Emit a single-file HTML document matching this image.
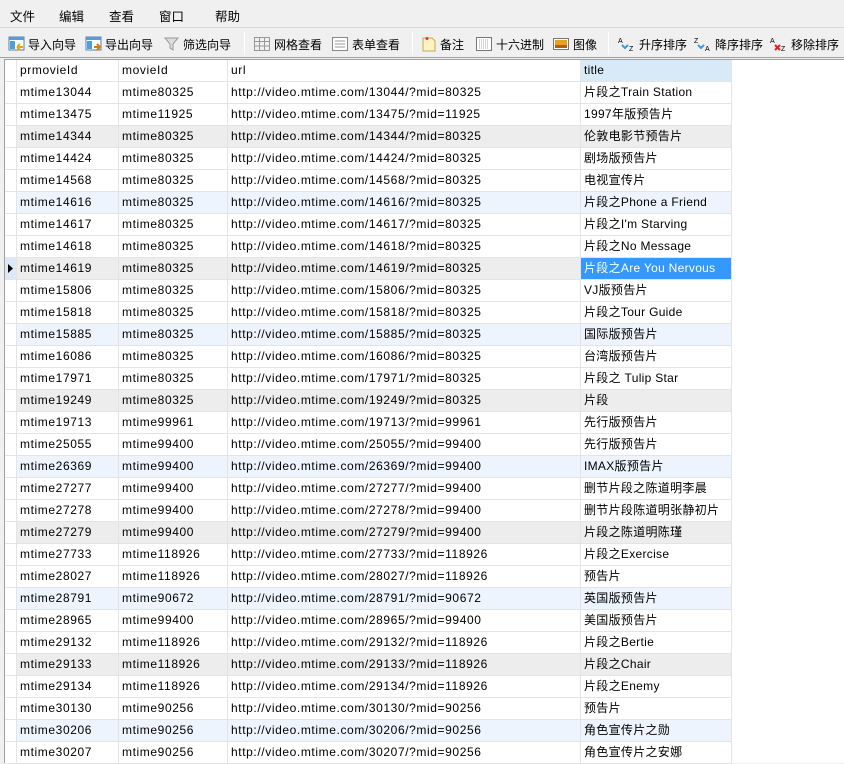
<!DOCTYPE html>
<html><head><meta charset="utf-8">
<style>
*{margin:0;padding:0;box-sizing:border-box}
body{width:844px;height:763px;overflow:hidden;background:#f0f0f0;font-family:"Liberation Sans","Noto Sans CJK SC",sans-serif;font-size:12px;color:#000;position:relative}
.menu{position:absolute;top:0;left:0;width:844px;height:28px;background:#f0f0f0;border-bottom:1px solid #d9d9d9}
.menu span{position:absolute;top:6px;font-size:12.5px}
.tb{position:absolute;top:29px;left:0;width:844px;height:29px;background:#f0f0f0;border-bottom:1px solid #a0a0a0}
.tb .it{position:absolute;top:6px;height:18px;display:flex;align-items:center;font-size:12px;white-space:nowrap}
.tb .it svg{margin-right:3px}
.sep{position:absolute;top:3px;width:1px;height:23px;background:#c8c8c8;border-right:1px solid #fff}
.grid{position:absolute;top:59px;left:4px;width:840px;height:704px;background:#fff;border-left:1px solid #a0a0a0;border-top:1px solid #a0a0a0}
.row{position:absolute;left:0;width:840px;height:22px}
.c{position:absolute;top:0;height:22px;line-height:21px;padding-left:3px;border-right:1px solid #e4e4e4;border-bottom:1px solid #e4e4e4;white-space:nowrap;overflow:hidden;letter-spacing:0.6px}
.c0{left:0;width:12px;padding:0}
.c1{left:12px;width:102px}
.c2{left:114px;width:109px}
.c3{left:223px;width:353px}
.c4{left:576px;width:151px;letter-spacing:0.3px}
.g .c1,.g .c2,.g .c3,.g .c4{background:#ededed}
.b .c1,.b .c2,.b .c3,.b .c4{background:#edf4fd}
.hdr .c4{background:#d8e9f8}
.sel .c4{background:#3399ff;color:#fff}
.sel .c0{background:#dce9f6}
</style></head><body>
<div class="menu">
<span style="left:10px">文件</span><span style="left:59px">编辑</span><span style="left:109px">查看</span><span style="left:159px">窗口</span><span style="left:215px">帮助</span>
</div>
<div class="tb">
<div class="it" style="left:8px"><svg width="17" height="16"><rect x="1" y="1" width="15" height="13" fill="#fff" stroke="#5a7fa8"/><rect x="1" y="1" width="15" height="3" fill="#5b9bd5"/><rect x="2" y="5" width="5" height="8" fill="#4aa0d8"/><path d="M9 11h6M9 11l3-3M9 11l3 3" stroke="#e0b000" stroke-width="2" fill="none"/></svg>导入向导</div>
<div class="it" style="left:85px"><svg width="17" height="16"><rect x="1" y="1" width="15" height="13" fill="#fff" stroke="#5a7fa8"/><rect x="1" y="1" width="15" height="3" fill="#5b9bd5"/><rect x="2" y="5" width="5" height="8" fill="#4aa0d8"/><path d="M9 11h6M15 11l-3-3M15 11l-3 3" stroke="#e07b00" stroke-width="2" fill="none"/></svg>导出向导</div>
<div class="it" style="left:163px"><svg width="17" height="16"><path d="M2 2h13l-5 6v6l-3-2v-4z" fill="#ddd" stroke="#999"/></svg>筛选向导</div>
<div class="sep" style="left:244px"></div>
<div class="it" style="left:253px"><svg width="18" height="16"><path d="M1.5 1.5h15v13h-15zM1.5 5.5h15M1.5 10h15M6.5 1.5v13M11.5 1.5v13" fill="none" stroke="#999"/></svg>网格查看</div>
<div class="it" style="left:331px"><svg width="18" height="16"><rect x="1.5" y="1.5" width="15" height="13" fill="#fff" stroke="#888"/><path d="M4 5h10M4 8h10M4 11h10" stroke="#999"/></svg>表单查看</div>
<div class="sep" style="left:412px"></div>
<div class="it" style="left:421px"><svg width="16" height="16"><path d="M2 2h9l3 3v10h-12z" fill="#fdf3c0" stroke="#c9a94a"/><circle cx="6" cy="2.5" r="1.5" fill="#d33"/></svg>备注</div>
<div class="it" style="left:475px"><svg width="18" height="16"><rect x="1.5" y="1.5" width="15" height="13" fill="#fff" stroke="#777"/><path d="M4 4h10M4 6h10M4 8h10M4 10h10M4 12h10" stroke="#aaa" stroke-dasharray="1 1"/></svg>十六进制</div>
<div class="it" style="left:552px"><svg width="18" height="16"><rect x="1.5" y="2.5" width="15" height="11" fill="#fff" stroke="#777"/><rect x="3" y="4" width="12" height="8" fill="#e8a020"/><rect x="3" y="9" width="12" height="3" fill="#b06010"/></svg>图像</div>
<div class="sep" style="left:608px"></div>
<div class="it" style="left:618px"><svg width="18" height="16"><text x="0" y="7" font-size="7" font-family="Liberation Sans">A</text><text x="11" y="15" font-size="7" font-family="Liberation Sans">Z</text><path d="M4 9l3 3 3-3" stroke="#3a9ad9" stroke-width="2" fill="none"/></svg>升序排序</div>
<div class="it" style="left:694px"><svg width="18" height="16"><text x="0" y="7" font-size="7" font-family="Liberation Sans">Z</text><text x="11" y="15" font-size="7" font-family="Liberation Sans">A</text><path d="M4 9l3 3 3-3" stroke="#3a9ad9" stroke-width="2" fill="none"/></svg>降序排序</div>
<div class="it" style="left:770px"><svg width="18" height="16"><text x="0" y="7" font-size="7" font-family="Liberation Sans">A</text><text x="11" y="15" font-size="7" font-family="Liberation Sans">Z</text><path d="M5 9l5 5M10 9l-5 5" stroke="#d22" stroke-width="2"/></svg>移除排序</div>
</div>
<div class="grid">
<div class="row hdr" style="top:0"><div class="c c0"></div><div class="c c1">prmovieId</div><div class="c c2">movieId</div><div class="c c3">url</div><div class="c c4">title</div></div>
<div class="row" style="top:22px"><div class="c c0"></div><div class="c c1">mtime13044</div><div class="c c2">mtime80325</div><div class="c c3">http://video.mtime.com/13044/?mid=80325</div><div class="c c4">片段之Train Station</div></div>
<div class="row" style="top:44px"><div class="c c0"></div><div class="c c1">mtime13475</div><div class="c c2">mtime11925</div><div class="c c3">http://video.mtime.com/13475/?mid=11925</div><div class="c c4">1997年版预告片</div></div>
<div class="row g" style="top:66px"><div class="c c0"></div><div class="c c1">mtime14344</div><div class="c c2">mtime80325</div><div class="c c3">http://video.mtime.com/14344/?mid=80325</div><div class="c c4">伦敦电影节预告片</div></div>
<div class="row" style="top:88px"><div class="c c0"></div><div class="c c1">mtime14424</div><div class="c c2">mtime80325</div><div class="c c3">http://video.mtime.com/14424/?mid=80325</div><div class="c c4">剧场版预告片</div></div>
<div class="row" style="top:110px"><div class="c c0"></div><div class="c c1">mtime14568</div><div class="c c2">mtime80325</div><div class="c c3">http://video.mtime.com/14568/?mid=80325</div><div class="c c4">电视宣传片</div></div>
<div class="row b" style="top:132px"><div class="c c0"></div><div class="c c1">mtime14616</div><div class="c c2">mtime80325</div><div class="c c3">http://video.mtime.com/14616/?mid=80325</div><div class="c c4">片段之Phone a Friend</div></div>
<div class="row" style="top:154px"><div class="c c0"></div><div class="c c1">mtime14617</div><div class="c c2">mtime80325</div><div class="c c3">http://video.mtime.com/14617/?mid=80325</div><div class="c c4">片段之I'm Starving</div></div>
<div class="row" style="top:176px"><div class="c c0"></div><div class="c c1">mtime14618</div><div class="c c2">mtime80325</div><div class="c c3">http://video.mtime.com/14618/?mid=80325</div><div class="c c4">片段之No Message</div></div>
<div class="row g sel" style="top:198px"><div class="c c0"><svg width="11" height="21"><path d="M3 6l5 4.5-5 4.5z" fill="#000"/></svg></div><div class="c c1">mtime14619</div><div class="c c2">mtime80325</div><div class="c c3">http://video.mtime.com/14619/?mid=80325</div><div class="c c4">片段之Are You Nervous</div></div>
<div class="row" style="top:220px"><div class="c c0"></div><div class="c c1">mtime15806</div><div class="c c2">mtime80325</div><div class="c c3">http://video.mtime.com/15806/?mid=80325</div><div class="c c4">VJ版预告片</div></div>
<div class="row" style="top:242px"><div class="c c0"></div><div class="c c1">mtime15818</div><div class="c c2">mtime80325</div><div class="c c3">http://video.mtime.com/15818/?mid=80325</div><div class="c c4">片段之Tour Guide</div></div>
<div class="row b" style="top:264px"><div class="c c0"></div><div class="c c1">mtime15885</div><div class="c c2">mtime80325</div><div class="c c3">http://video.mtime.com/15885/?mid=80325</div><div class="c c4">国际版预告片</div></div>
<div class="row" style="top:286px"><div class="c c0"></div><div class="c c1">mtime16086</div><div class="c c2">mtime80325</div><div class="c c3">http://video.mtime.com/16086/?mid=80325</div><div class="c c4">台湾版预告片</div></div>
<div class="row" style="top:308px"><div class="c c0"></div><div class="c c1">mtime17971</div><div class="c c2">mtime80325</div><div class="c c3">http://video.mtime.com/17971/?mid=80325</div><div class="c c4">片段之 Tulip Star</div></div>
<div class="row g" style="top:330px"><div class="c c0"></div><div class="c c1">mtime19249</div><div class="c c2">mtime80325</div><div class="c c3">http://video.mtime.com/19249/?mid=80325</div><div class="c c4">片段</div></div>
<div class="row" style="top:352px"><div class="c c0"></div><div class="c c1">mtime19713</div><div class="c c2">mtime99961</div><div class="c c3">http://video.mtime.com/19713/?mid=99961</div><div class="c c4">先行版预告片</div></div>
<div class="row" style="top:374px"><div class="c c0"></div><div class="c c1">mtime25055</div><div class="c c2">mtime99400</div><div class="c c3">http://video.mtime.com/25055/?mid=99400</div><div class="c c4">先行版预告片</div></div>
<div class="row b" style="top:396px"><div class="c c0"></div><div class="c c1">mtime26369</div><div class="c c2">mtime99400</div><div class="c c3">http://video.mtime.com/26369/?mid=99400</div><div class="c c4">IMAX版预告片</div></div>
<div class="row" style="top:418px"><div class="c c0"></div><div class="c c1">mtime27277</div><div class="c c2">mtime99400</div><div class="c c3">http://video.mtime.com/27277/?mid=99400</div><div class="c c4">删节片段之陈道明李晨</div></div>
<div class="row" style="top:440px"><div class="c c0"></div><div class="c c1">mtime27278</div><div class="c c2">mtime99400</div><div class="c c3">http://video.mtime.com/27278/?mid=99400</div><div class="c c4">删节片段陈道明张静初片</div></div>
<div class="row g" style="top:462px"><div class="c c0"></div><div class="c c1">mtime27279</div><div class="c c2">mtime99400</div><div class="c c3">http://video.mtime.com/27279/?mid=99400</div><div class="c c4">片段之陈道明陈瑾</div></div>
<div class="row" style="top:484px"><div class="c c0"></div><div class="c c1">mtime27733</div><div class="c c2">mtime118926</div><div class="c c3">http://video.mtime.com/27733/?mid=118926</div><div class="c c4">片段之Exercise</div></div>
<div class="row" style="top:506px"><div class="c c0"></div><div class="c c1">mtime28027</div><div class="c c2">mtime118926</div><div class="c c3">http://video.mtime.com/28027/?mid=118926</div><div class="c c4">预告片</div></div>
<div class="row b" style="top:528px"><div class="c c0"></div><div class="c c1">mtime28791</div><div class="c c2">mtime90672</div><div class="c c3">http://video.mtime.com/28791/?mid=90672</div><div class="c c4">英国版预告片</div></div>
<div class="row" style="top:550px"><div class="c c0"></div><div class="c c1">mtime28965</div><div class="c c2">mtime99400</div><div class="c c3">http://video.mtime.com/28965/?mid=99400</div><div class="c c4">美国版预告片</div></div>
<div class="row" style="top:572px"><div class="c c0"></div><div class="c c1">mtime29132</div><div class="c c2">mtime118926</div><div class="c c3">http://video.mtime.com/29132/?mid=118926</div><div class="c c4">片段之Bertie</div></div>
<div class="row g" style="top:594px"><div class="c c0"></div><div class="c c1">mtime29133</div><div class="c c2">mtime118926</div><div class="c c3">http://video.mtime.com/29133/?mid=118926</div><div class="c c4">片段之Chair</div></div>
<div class="row" style="top:616px"><div class="c c0"></div><div class="c c1">mtime29134</div><div class="c c2">mtime118926</div><div class="c c3">http://video.mtime.com/29134/?mid=118926</div><div class="c c4">片段之Enemy</div></div>
<div class="row" style="top:638px"><div class="c c0"></div><div class="c c1">mtime30130</div><div class="c c2">mtime90256</div><div class="c c3">http://video.mtime.com/30130/?mid=90256</div><div class="c c4">预告片</div></div>
<div class="row b" style="top:660px"><div class="c c0"></div><div class="c c1">mtime30206</div><div class="c c2">mtime90256</div><div class="c c3">http://video.mtime.com/30206/?mid=90256</div><div class="c c4">角色宣传片之勋</div></div>
<div class="row" style="top:682px"><div class="c c0"></div><div class="c c1">mtime30207</div><div class="c c2">mtime90256</div><div class="c c3">http://video.mtime.com/30207/?mid=90256</div><div class="c c4">角色宣传片之安娜</div></div>
</div>
</body></html>
